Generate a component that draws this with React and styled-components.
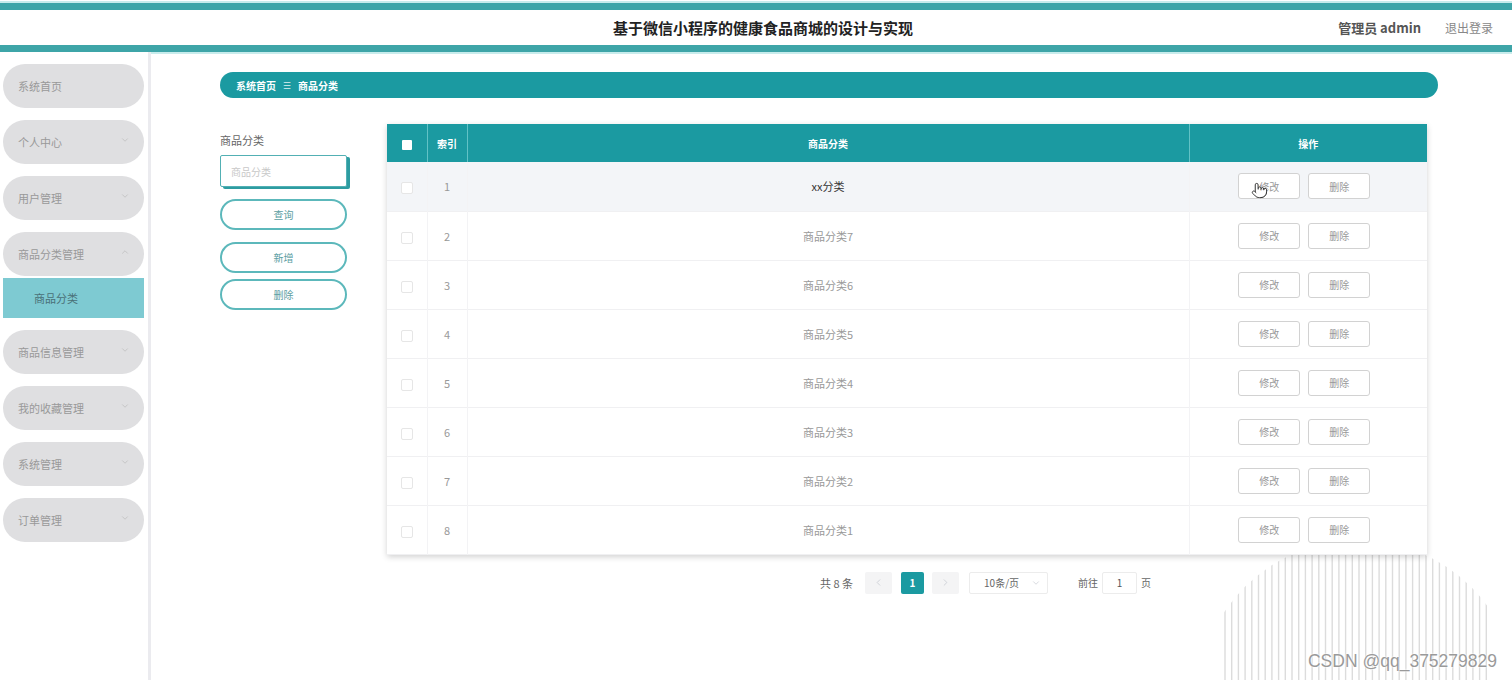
import React from 'react';
import styled, { createGlobalStyle } from 'styled-components';
import { ChevronDown, ChevronUp, ChevronLeft, ChevronRight, Pointer } from 'lucide-react';

const TEAL = '#1b9aa1';

const GlobalStyle = createGlobalStyle`
  body {
    margin: 0;
    background: #ffffff;
    font-family: "Noto Sans CJK SC", "Noto Sans", sans-serif;
  }
`;

const menu = [
  { name: '系统首页' },
  { name: '个人中心', arrow: true },
  { name: '用户管理', arrow: true },
  { name: '商品分类管理', arrow: true, open: true, children: ['商品分类'] },
  { name: '商品信息管理', arrow: true },
  { name: '我的收藏管理', arrow: true },
  { name: '系统管理', arrow: true },
  { name: '订单管理', arrow: true },
];

const rows = [
  { id: 1, name: 'xx分类', hover: true },
  { id: 2, name: '商品分类7' },
  { id: 3, name: '商品分类6' },
  { id: 4, name: '商品分类5' },
  { id: 5, name: '商品分类4' },
  { id: 6, name: '商品分类3' },
  { id: 7, name: '商品分类2' },
  { id: 8, name: '商品分类1' },
];

const App = () => {
  return (
    <Page>
      <GlobalStyle />
      <Decoration width="300" height="200" viewBox="0 0 300 200">
        <defs>
          <clipPath id="circ">
            <circle cx="138" cy="220" r="160" />
          </clipPath>
        </defs>
        <g clipPath="url(#circ)" stroke="#dcdcdc" strokeWidth="1.4">
          {Array.from({ length: 40 }).map((_, i) => (
            <line key={i} x1={5 + i * 6.7} y1="0" x2={5 + i * 6.7} y2="200" />
          ))}
        </g>
      </Decoration>
      <Header>
        <span />
        <Title>基于微信小程序的健康食品商城的设计与实现</Title>
        <HeaderRight>
          <User>管理员 admin</User>
          <Logout>退出登录</Logout>
        </HeaderRight>
      </Header>
      <Body>
        <Sidebar>
          {menu.map((m) => (
            <MenuGroup key={m.name}>
              <MenuItem>
                <span>{m.name}</span>
                {m.arrow &&
                  (m.open ? (
                    <ChevronUp size={10} strokeWidth={1.5} />
                  ) : (
                    <ChevronDown size={10} strokeWidth={1.5} />
                  ))}
              </MenuItem>
              {m.children &&
                m.children.map((c) => <SubItem key={c}>{c}</SubItem>)}
            </MenuGroup>
          ))}
        </Sidebar>
        <Main>
          <Breadcrumb>
            <span>系统首页</span>
            <Sep>☰</Sep>
            <span>商品分类</span>
          </Breadcrumb>
          <Content>
            <SearchPanel>
              <Label>商品分类</Label>
              <Input placeholder="商品分类" />
              <PillButton>查询</PillButton>
              <PillButton $top={12}>新增</PillButton>
              <PillButton $top={6}>删除</PillButton>
            </SearchPanel>
            <TableArea>
              <Table>
                <colgroup>
                  <col style={{ width: 40 }} />
                  <col style={{ width: 40 }} />
                  <col />
                  <col style={{ width: 238 }} />
                </colgroup>
                <thead>
                  <tr>
                    <Th>
                      <HeadBox />
                    </Th>
                    <Th>索引</Th>
                    <Th>商品分类</Th>
                    <Th>操作</Th>
                  </tr>
                </thead>
                <tbody>
                  {rows.map((r) => (
                    <Tr key={r.id} $hover={r.hover}>
                      <Td>
                        <Box />
                      </Td>
                      <Td>{r.id}</Td>
                      <Td $dark={r.hover}>{r.name}</Td>
                      <Td>
                        <Actions>
                          <ActionButton>
                            修改
                            {r.hover && (
                              <Cursor>
                                <Pointer size={17} strokeWidth={1.4} fill="#fff" />
                              </Cursor>
                            )}
                          </ActionButton>
                          <ActionButton>删除</ActionButton>
                        </Actions>
                      </Td>
                    </Tr>
                  ))}
                </tbody>
              </Table>
              <Pager>
                <Total>共 8 条</Total>
                <PageBtn>
                  <ChevronLeft size={11} strokeWidth={1.5} />
                </PageBtn>
                <PageNum>1</PageNum>
                <PageBtn>
                  <ChevronRight size={11} strokeWidth={1.5} />
                </PageBtn>
                <SizeSelect>
                  <span>10条/页</span>
                  <ChevronDown size={10} strokeWidth={1.5} />
                </SizeSelect>
                <Jump>
                  前往
                  <JumpInput>1</JumpInput>
                  页
                </Jump>
              </Pager>
            </TableArea>
          </Content>
        </Main>
      </Body>
      <Watermark>CSDN @qq_375279829</Watermark>
    </Page>
  );
};

const Page = styled.div`
  position: relative;
  display: flex;
  flex-direction: column;
  height: 680px;
  overflow: hidden;
`;

const Decoration = styled.svg`
  position: absolute;
  left: 1220px;
  top: 480px;
  z-index: 0;
`;

const Header = styled.header`
  display: grid;
  grid-template-columns: 1fr auto 1fr;
  align-items: center;
  height: 35px;
  margin-top: 3px;
  border-top: 7px solid #3ea5a8;
  border-bottom: 7px solid #3ea5a8;
  box-shadow: 0 -2px 0 #c8ecec, 0 2px 0 #c8ecec;
  background: #fff;
`;

const Title = styled.h1`
  margin: 0 0 0 14px;
  font-size: 15px;
  font-weight: 700;
  color: #222;
`;

const HeaderRight = styled.div`
  display: flex;
  justify-content: flex-end;
  align-items: center;
  gap: 24px;
  padding-right: 19px;
`;

const User = styled.span`
  font-size: 13px;
  font-weight: 700;
  color: #555;
`;

const Logout = styled.span`
  font-size: 12px;
  color: #888;
`;

const Body = styled.div`
  position: relative;
  z-index: 1;
  display: flex;
  flex: 1;
  min-height: 0;
`;

const Sidebar = styled.aside`
  width: 145px;
  padding: 12px 0 0 3px;
  border-right: 3px solid #ebebef;
  background: #fff;
`;

const MenuGroup = styled.div`
  margin-bottom: 12px;
`;

const MenuItem = styled.div`
  display: flex;
  align-items: center;
  justify-content: space-between;
  width: 141px;
  height: 44px;
  box-sizing: border-box;
  padding: 0 14px 0 15px;
  border-radius: 22px;
  background: #dfdfe1;
  font-size: 11px;
  color: #999;

  svg {
    color: #b5b5b5;
    margin-top: -4px;
  }
`;

const SubItem = styled.div`
  display: flex;
  align-items: center;
  width: 141px;
  height: 40px;
  margin-top: 2px;
  box-sizing: border-box;
  padding-left: 31px;
  background: #7ecad2;
  font-size: 11px;
  color: #4a7077;
`;

const Main = styled.main`
  flex: 1;
  padding: 20px 74px 0 69px;
`;

const Breadcrumb = styled.div`
  display: flex;
  align-items: center;
  gap: 7px;
  height: 26px;
  padding-left: 16px;
  border-radius: 13px;
  background: ${TEAL};
  color: #fff;
  font-size: 10px;
  font-weight: 700;
`;

const Sep = styled.span`
  font-weight: 400;
  font-size: 9px;
  opacity: 0.85;
`;

const Content = styled.div`
  display: flex;
  gap: 37px;
  margin-top: 26px;
`;

const SearchPanel = styled.div`
  display: flex;
  flex-direction: column;
  width: 130px;
  padding-top: 8px;
`;

const Label = styled.div`
  font-size: 11px;
  color: #666;
  margin-bottom: 7px;
`;

const Input = styled.input`
  width: 127px;
  height: 32px;
  box-sizing: border-box;
  padding: 0 10px;
  border: 1.5px solid #52b0b4;
  border-radius: 2px;
  box-shadow: 3px 2px 0 #2d9ca1;
  font-family: inherit;
  font-size: 10px;
  outline: none;
  margin-bottom: 12px;

  &::placeholder {
    color: #c8c8c8;
  }
`;

const PillButton = styled.button`
  width: 127px;
  height: 31px;
  margin-top: ${(p) => p.$top || 0}px;
  border: 2px solid #5cb8bb;
  border-radius: 16px;
  background: #fff;
  font-family: inherit;
  font-size: 10px;
  color: #5b9ea2;
`;

const TableArea = styled.div`
  display: flex;
  flex-direction: column;
`;

const Table = styled.table`
  width: 1040px;
  border-collapse: collapse;
  table-layout: fixed;
  background: #fff;
  box-shadow: 0 2px 6px rgba(0, 0, 0, 0.18);
`;

const Th = styled.th`
  height: 38px;
  padding: 0;
  background: ${TEAL};
  color: #fff;
  font-size: 10px;
  font-weight: 700;
  text-align: center;
  border-left: 1px solid #62c2c6;

  &:first-child {
    border-left: none;
  }
`;

const HeadBox = styled.span`
  display: inline-block;
  width: 10px;
  height: 10px;
  background: #fff;
  border-radius: 1px;
  vertical-align: middle;
`;

const Tr = styled.tr`
  height: 49px;
  background: ${(p) => (p.$hover ? '#f3f5f8' : '#fff')};
  border-bottom: 1px solid #f0f0f2;
`;

const Td = styled.td`
  padding: 0;
  text-align: center;
  font-size: 11px;
  color: ${(p) => (p.$dark ? '#333' : '#999')};
  border-left: 1px solid #f3f3f5;

  &:first-child {
    border-left: none;
  }
`;

const Box = styled.span`
  display: inline-block;
  width: 10px;
  height: 10px;
  border: 1px solid #e6e6e6;
  border-radius: 2px;
  background: #fff;
  vertical-align: middle;
`;

const Actions = styled.div`
  display: flex;
  justify-content: center;
  gap: 8px;
  padding-right: 8px;
`;

const ActionButton = styled.button`
  position: relative;
  width: 62px;
  height: 26px;
  border: 1px solid #d2d2d2;
  border-radius: 3px;
  background: #fff;
  font-family: inherit;
  font-size: 10px;
  color: #999;
`;

const Cursor = styled.span`
  position: absolute;
  left: 12px;
  top: 8px;
  color: #333;
  line-height: 0;
`;

const Pager = styled.div`
  display: flex;
  align-items: center;
  height: 22px;
  margin-top: 17px;
  padding-left: 433px;
  font-size: 11px;
  color: #666;
`;

const Total = styled.span`
  margin-right: 12px;
`;

const PageBtn = styled.span`
  display: flex;
  align-items: center;
  justify-content: center;
  width: 27px;
  height: 22px;
  background: #f4f4f5;
  color: #c0c4cc;
  border-radius: 2px;
`;

const PageNum = styled.span`
  display: flex;
  align-items: center;
  justify-content: center;
  width: 23px;
  height: 22px;
  margin: 0 8px 0 9px;
  background: ${TEAL};
  color: #fff;
  font-weight: 700;
  font-size: 10px;
  border-radius: 2px;
`;

const SizeSelect = styled.span`
  display: flex;
  align-items: center;
  justify-content: space-between;
  width: 79px;
  height: 22px;
  box-sizing: border-box;
  margin-left: 10px;
  padding: 0 6px 0 14px;
  border: 1px solid #ececec;
  border-radius: 2px;
  font-size: 10px;

  svg {
    color: #c0c4cc;
  }
`;

const Jump = styled.span`
  display: flex;
  align-items: center;
  gap: 4px;
  margin-left: 30px;
  font-size: 10px;
`;

const JumpInput = styled.span`
  display: flex;
  align-items: center;
  justify-content: center;
  width: 35px;
  height: 22px;
  box-sizing: border-box;
  border: 1px solid #ececec;
  border-radius: 2px;
  color: #555;
`;

const Watermark = styled.div`
  position: absolute;
  right: 15px;
  bottom: 8px;
  z-index: 2;
  font-family: "Liberation Sans", Arial, sans-serif;
  font-size: 17.5px;
  color: #9a9a9a;
  text-shadow: 0 0 2px #fff, 0 0 2px #fff;
`;

export default App;
